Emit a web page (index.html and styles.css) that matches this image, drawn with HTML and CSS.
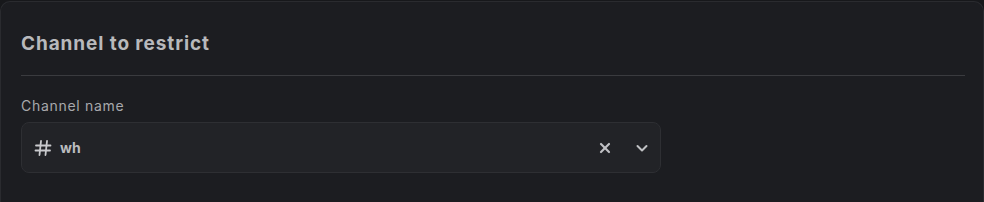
FILE: index.html
```html
<!DOCTYPE html>
<html lang="en">
<head>
  <meta charset="UTF-8" />
  <title>Channel to restrict</title>
  <link rel="stylesheet" href="styles.css">
</head>
<body>
  <div class="card">
    <div class="card-title">Channel to restrict</div>
    <div class="divider"></div>

    <label class="field-label">Channel name</label>
    <div class="select">
      <span class="hash">
        <svg width="18" height="18" viewBox="0 0 18 18" fill="none" stroke="currentColor" stroke-width="1.8" stroke-linecap="round">
          <line x1="7" y1="2" x2="5.5" y2="16" />
          <line x1="13" y1="2" x2="11.5" y2="16" />
          <line x1="2" y1="6.5" x2="16.5" y2="6.5" />
          <line x1="1.5" y1="11.5" x2="16" y2="11.5" />
        </svg>
      </span>
      <span class="select-value">wh</span>
      <span class="select-actions">
        <svg class="clear" width="12" height="12" viewBox="0 0 12 12" stroke="currentColor" stroke-width="2.2" stroke-linecap="round">
          <line x1="2" y1="2" x2="10" y2="10" />
          <line x1="10" y1="2" x2="2" y2="10" />
        </svg>
        <svg class="chevron" width="14" height="14" viewBox="0 0 14 14" fill="none" stroke="currentColor" stroke-width="2" stroke-linecap="round" stroke-linejoin="round">
          <polyline points="2.5,5 7,9.5 11.5,5" />
        </svg>
      </span>
    </div>
  </div>
</body>
</html>
```

FILE: styles.css
```css
body {
  margin: 0;
  padding: 0;
  background: #17181b;
  font-family: Inter, "Open Sans", sans-serif;
}

.card {
  margin-top: 1px;
  height: 201px;
  overflow: hidden;
  background: #1c1d21;
  border: 1px solid #2a2b2f;
  border-bottom: none;
  border-radius: 10px 10px 0 0;
  padding: 0 18px 0 20px;
  box-sizing: border-box;
}

.card-title {
  padding-top: 29px;
  font-size: 19px;
  font-weight: 700;
  letter-spacing: 0.9px;
  color: #b8b9bc;
  line-height: 26px;
}

.divider {
  margin-top: 18px;
  height: 1px;
  background: #3a3b3f;
}

.field-label {
  display: block;
  margin-top: 21px;
  font-size: 14px;
  letter-spacing: 0.7px;
  color: #a8a9ac;
  line-height: 18px;
}

.select {
  margin-top: 7px;
  width: 640px;
  height: 51px;
  box-sizing: border-box;
  display: flex;
  align-items: center;
  background: #222327;
  border: 1px solid #2e2f33;
  border-radius: 8px;
  padding: 0 11px 0 12px;
  color: #c4c5c8;
}

.hash {
  display: flex;
  color: #c9cacd;
}

.select-value {
  margin-left: 8px;
  font-size: 14px;
  font-weight: 700;
  color: #bbbcbf;
}

.select-actions {
  margin-left: auto;
  display: flex;
  align-items: center;
  gap: 24px;
  color: #c0c1c4;
}
```
